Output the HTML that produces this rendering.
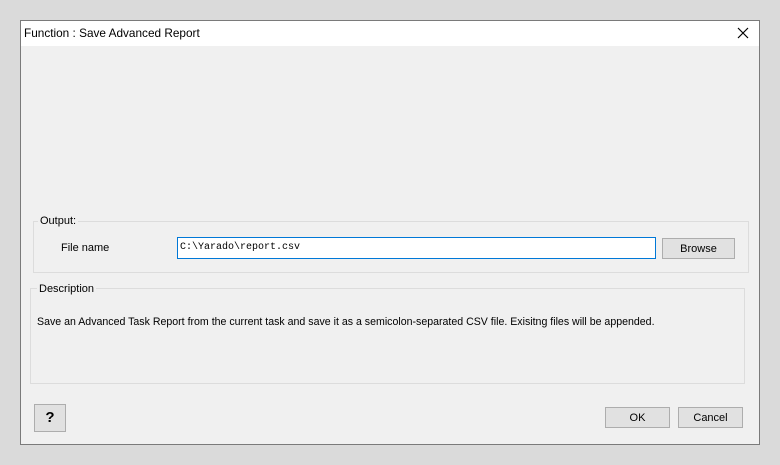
<!DOCTYPE html>
<html><head><style>
body{margin:0;width:780px;height:465px;background:#dadada;position:relative;font-family:"Liberation Sans",sans-serif;font-size:11px;color:#000;overflow:hidden}
.a{position:absolute}
.win{left:20px;top:20px;width:738px;height:423px;border:1px solid #7a7a7a;background:#f0f0f0}
.title{left:21px;top:21px;width:738px;height:25px;background:#fff}
.grp{border:1px solid #dcdcdc}
.btn{background:#e1e1e1;border:1px solid #adadad;box-sizing:border-box;text-align:center}
</style></head><body>
<div class="a win"></div>
<div class="a title"></div>
<div class="a" style="left:24px;top:26px;font-size:11.8px">Function : Save Advanced Report</div>
<svg class="a" style="left:737px;top:27px" width="12" height="12"><path d="M1 1L11 11M11 1L1 11" stroke="#000" stroke-width="1.2"/></svg>
<div class="a grp" style="left:33px;top:221px;width:714px;height:50px"></div>
<div class="a" style="left:38px;top:215px;background:#f0f0f0;padding:0 2px">Output:</div>
<div class="a" style="left:61px;top:242px">File name</div>
<div class="a" style="left:177px;top:237px;width:477px;height:20px;border:1px solid #0078d7;background:#fff"></div>
<div class="a" style="left:180px;top:242px;font-family:'Liberation Mono',monospace;font-size:10px">C:\Yarado\report.csv</div>
<div class="a btn" style="left:662px;top:238px;width:73px;height:21px;line-height:21px">Browse</div>
<div class="a grp" style="left:30px;top:288px;width:713px;height:94px"></div>
<div class="a" style="left:37px;top:283px;background:#f0f0f0;padding:0 2px">Description</div>
<div class="a" style="left:37px;top:316px;font-size:10.6px">Save an Advanced Task Report from the current task and save it as a semicolon-separated CSV file. Exisitng files will be appended.</div>
<div class="a btn" style="left:34px;top:404px;width:32px;height:28px;line-height:26px;font-weight:bold;font-size:15px">?</div>
<div class="a btn" style="left:605px;top:407px;width:65px;height:21px;line-height:21px">OK</div>
<div class="a btn" style="left:678px;top:407px;width:65px;height:21px;line-height:21px">Cancel</div>
</body></html>
